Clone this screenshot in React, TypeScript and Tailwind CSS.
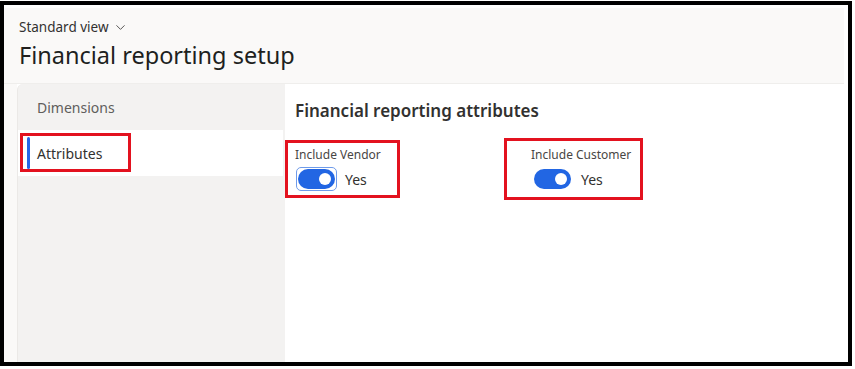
import { ChevronDown } from "lucide-react";

const font = { fontFamily: '"Noto Sans", "Open Sans", sans-serif' };

function Toggle({ focused }: { focused?: boolean }) {
  const pill = (
    <div className="flex h-[20px] w-[37px] items-center justify-end rounded-full bg-[#2266e3] pr-[4px]">
      <div className="h-[12px] w-[12px] rounded-full bg-white" />
    </div>
  );
  if (!focused) {
    return <div className="p-[2px]">{pill}</div>;
  }
  return (
    <div className="rounded-[5px] border border-[#6f9bea] p-px">{pill}</div>
  );
}

function Field({ label, focused }: { label: string; focused?: boolean }) {
  return (
    <div className="w-[236px]">
      <p className="text-[12px] leading-[16px] text-[#484644]">{label}</p>
      <div className="mt-[4px] flex items-center gap-[8px] pl-px">
        <Toggle focused={focused} />
        <span className="text-[14px] text-[#323130]">Yes</span>
      </div>
    </div>
  );
}

export default function App() {
  return (
    <div className="h-[369px] w-[855px] bg-white pt-px" style={font}>
      <div className="flex h-[365px] w-[852px] flex-col border-4 border-black bg-white">
        <div className="mr-[4px] mt-[3px] h-[76px] border-b border-[#efeeec] bg-[#faf9f8] pl-[15px] pt-[10px]">
          <div className="flex items-center gap-[4px] text-[13.5px] leading-[18px] text-[#323130]">
            Standard view
            <ChevronDown className="h-[15px] w-[15px]" strokeWidth={1.3} />
          </div>
          <h1 className="mt-[4px] text-[23.5px] leading-[30px] text-[#201f1e]">
            Financial reporting setup
          </h1>
        </div>
        <div className="flex flex-1">
          <div className="w-[13px] bg-[#faf9f8]" />
          <div className="w-[268px] rounded-tl-md border-l border-[#ebe9e7] bg-[#f3f2f1] pr-[2px]">
            <div className="flex h-[46px] items-center pl-[19px] text-[14px] text-[#605e5c]">
              Dimensions
            </div>
            <div className="relative flex h-[46px] items-center bg-white">
              <div className="ml-[9px] h-[32px] w-[3px] rounded-full bg-[#2864e6]" />
              <span className="ml-[7px] text-[14px] text-[#323130]">Attributes</span>
              <div className="absolute left-[2px] top-[3px] h-[39px] w-[111px] border-[3px] border-[#e3121f]" />
            </div>
          </div>
          <div className="relative flex-1 pl-[10px] pt-[15px]">
            <h2 className="text-[17px] font-semibold leading-[24px] text-[#323130]">
              Financial reporting attributes
            </h2>
            <div className="mt-[24px] flex">
              <Field label="Include Vendor" focused />
              <Field label="Include Customer" />
            </div>
            <div className="absolute left-0 top-[56px] h-[58px] w-[115px] border-[3px] border-[#e3121f]" />
            <div className="absolute left-[219px] top-[54px] h-[62px] w-[139px] border-[3px] border-[#e3121f]" />
          </div>
        </div>
      </div>
    </div>
  );
}
